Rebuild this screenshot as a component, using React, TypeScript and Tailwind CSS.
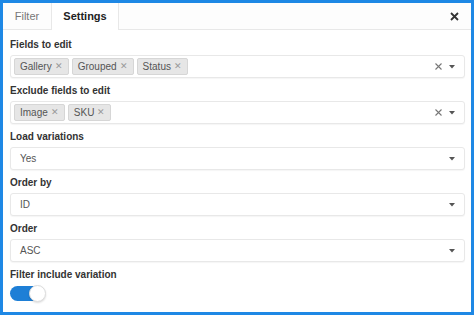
import React from 'react';

const font = { fontFamily: '"Liberation Sans", Arial, sans-serif' };

const Caret = () => (
  <svg width="6" height="4" viewBox="0 0 6 4" className="ml-[7px]">
    <path d="M0 0h6L3 3.5z" fill="#555" />
  </svg>
);

const ClearX = () => (
  <svg width="7" height="7" viewBox="0 0 7 7">
    <path d="M0.5 0.5l6 6M6.5 0.5l-6 6" stroke="#777" strokeWidth="1.1" />
  </svg>
);

const Chip = ({ label }: { label: string }) => (
  <span className="flex h-[17px] items-center gap-[3px] rounded-[2px] border border-[#d6d6d6] bg-[#e6e6e6] px-[5px] text-[10px] text-[#555]">
    {label}
    <span className="text-[9px] leading-none text-[#999]">✕</span>
  </span>
);

const Field = ({ label, children }: { label: string; children: React.ReactNode }) => (
  <div className="flex flex-col">
    <div className="mb-[3px] text-[10px] font-bold leading-[14px] text-[#333]">{label}</div>
    {children}
  </div>
);

const MultiSelect = ({ items }: { items: string[] }) => (
  <div className="flex h-[23px] items-center rounded-[3px] border border-[#e8e8e8] bg-white pl-[3px] pr-[9px] shadow-[0_1px_1px_rgba(0,0,0,0.04)]">
    <div className="flex flex-1 gap-[3px]">
      {items.map((i) => (
        <Chip key={i} label={i} />
      ))}
    </div>
    <ClearX />
    <Caret />
  </div>
);

const Select = ({ value }: { value: string }) => (
  <div className="flex h-[23px] items-center rounded-[3px] border border-[#e8e8e8] bg-white pl-[9px] pr-[9px] shadow-[0_1px_1px_rgba(0,0,0,0.04)]">
    <span className="flex-1 text-[10px] text-[#555]">{value}</span>
    <Caret />
  </div>
);

export default function App() {
  return (
    <div style={font} className="h-[315px] w-[474px] border-[3px] border-[#1e88e5] bg-white">
      <div className="flex h-[27px] items-stretch border-b border-[#e8e8e8] bg-[#fdfdfd]">
        <div className="flex w-[48px] items-center justify-center text-[11px] text-[#777]">Filter</div>
        <div className="-mb-px flex w-[68px] items-center justify-center border-x border-[#e8e8e8] bg-white text-[11px] font-bold text-[#222]">
          Settings
        </div>
        <div className="flex flex-1 items-center justify-end pr-[12px]">
          <svg width="9" height="9" viewBox="0 0 9 9">
            <path d="M1 1l7 7M8 1L1 8" stroke="#333" strokeWidth="1.8" />
          </svg>
        </div>
      </div>
      <div className="flex flex-col gap-[6px] pl-[7px] pr-[6px] pt-[8px]">
        <Field label="Fields to edit">
          <MultiSelect items={['Gallery', 'Grouped', 'Status']} />
        </Field>
        <Field label="Exclude fields to edit">
          <MultiSelect items={['Image', 'SKU']} />
        </Field>
        <Field label="Load variations">
          <Select value="Yes" />
        </Field>
        <Field label="Order by">
          <Select value="ID" />
        </Field>
        <Field label="Order">
          <Select value="ASC" />
        </Field>
        <Field label="Filter include variation">
          <div className="relative mt-[1px] h-[15px] w-[35px] rounded-full bg-[#1e7fd6]">
            <div className="absolute right-[-1px] top-[-1px] h-[17px] w-[17px] rounded-full border border-[#ddd] bg-white shadow-[0_1px_2px_rgba(0,0,0,0.15)]" />
          </div>
        </Field>
      </div>
    </div>
  );
}
